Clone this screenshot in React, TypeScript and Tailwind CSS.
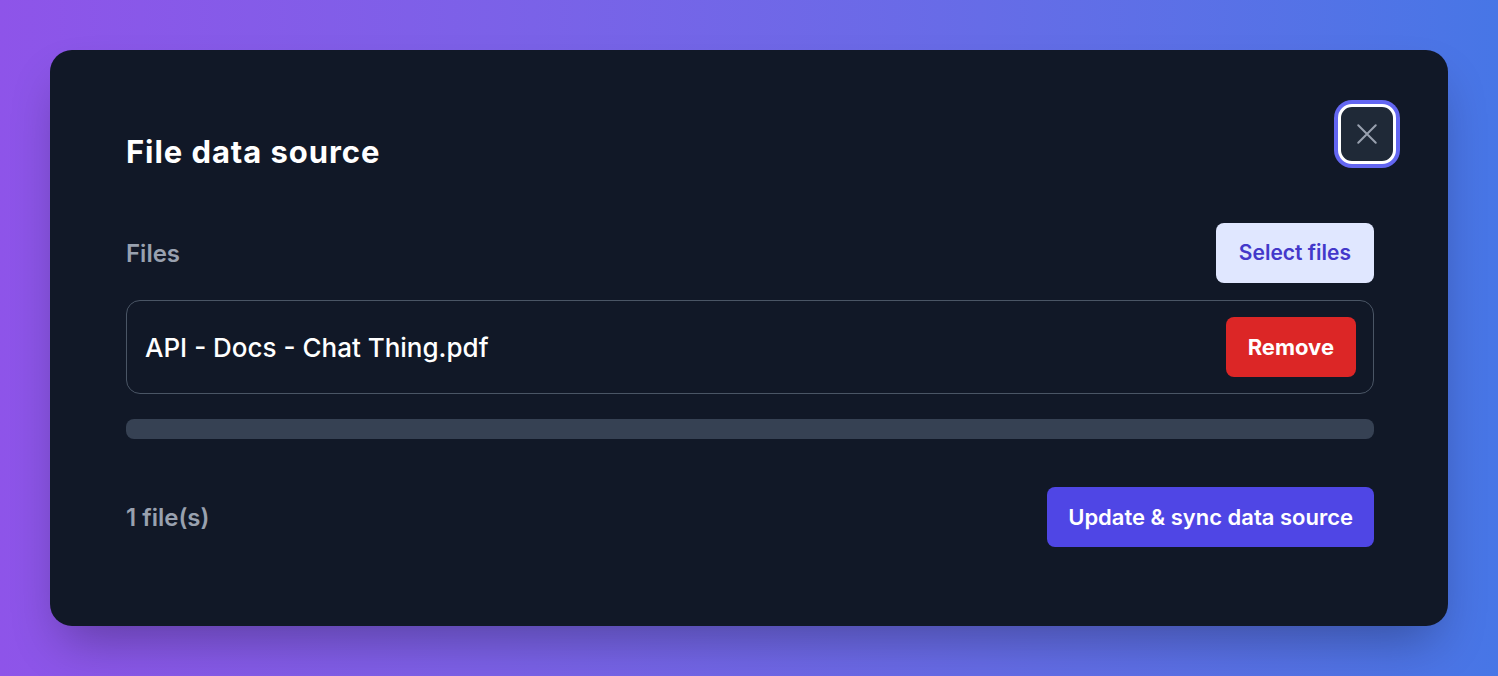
import React from "react";

function CloseIcon() {
  return (
    <svg viewBox="0 0 24 24" className="w-[30px] h-[30px]" fill="none" stroke="currentColor" strokeWidth={1.6} strokeLinecap="round">
      <path d="M5 5l14 14M19 5L5 19" />
    </svg>
  );
}

export default function App() {
  return (
    <div
      className="w-full h-[676px] bg-gradient-to-r from-[#8e54e9] to-[#4776e6] px-[50px] pt-[50px] overflow-hidden"
      style={{ fontFamily: "Inter, 'Noto Sans', sans-serif" }}
    >
      <div className="relative bg-[#111827] rounded-[22px] shadow-2xl shadow-black/30 pl-[76px] pr-[74px] pt-[84px] pb-[79px]">
        <button className="absolute top-[54px] right-[52px] w-[58px] h-[60px] rounded-[14px] bg-[#1f2937] border-[3px] border-white ring-4 ring-[#6366f1] flex items-center justify-center text-gray-400">
          <CloseIcon />
        </button>

        <h1 className="text-[31px] leading-9 font-bold text-white tracking-[0.03em]">File data source</h1>

        <div className="mt-[53px] flex items-center justify-between">
          <span className="text-[24px] font-semibold text-gray-400 pt-px">Files</span>
          <button className="h-[60px] px-[23px] rounded-lg bg-[#e0e7ff] text-[#4338ca] text-[21px] font-semibold">
            Select files
          </button>
        </div>

        <div className="mt-[17px] border border-gray-600 rounded-[14px] pl-[18px] pr-[17px] py-4 flex items-center justify-between">
          <span className="text-[26px] font-medium text-white">API - Docs - Chat Thing.pdf</span>
          <button className="h-[60px] px-[22px] rounded-lg bg-[#dc2626] text-white text-[22px] font-bold">
            Remove
          </button>
        </div>

        <div className="mt-[25px] h-5 rounded-lg bg-gray-700" />

        <div className="mt-[48px] flex items-center justify-between">
          <span className="text-[24px] font-semibold text-gray-400 pt-px">1 file(s)</span>
          <button className="h-[60px] px-[21px] rounded-lg bg-[#4f46e5] text-white text-[22px] font-semibold">
            Update &amp; sync data source
          </button>
        </div>
      </div>
    </div>
  );
}
